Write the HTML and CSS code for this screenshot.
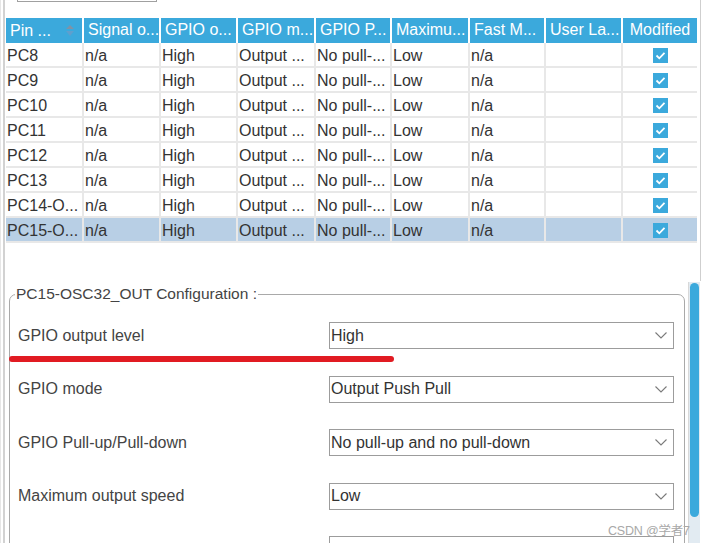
FILE: index.html
```
<!DOCTYPE html>
<html>
<head>
<meta charset="utf-8">
<link rel="stylesheet" href="styles.css">
</head>
<body>
<div class="app">
  <div class="main">
    <section class="table-panel">
      <div class="stub"></div>
      <div class="grid">
        <div class="th th-sort"><span>Pin ...</span>
          <svg class="sort" width="10" height="13" viewBox="0 0 10 13"><path d="M1 5 L5 1 L9 5 Z" fill="#7f93a6"/><path d="M1 7 L9 7 L5 12 Z" fill="#5f9fcd"/></svg>
        </div>
        <div class="th">Signal o...</div>
        <div class="th">GPIO o...</div>
        <div class="th">GPIO m...</div>
        <div class="th">GPIO P...</div>
        <div class="th">Maximu...</div>
        <div class="th">Fast M...</div>
        <div class="th">User La...</div>
        <div class="th th-last">Modified</div>

        <div class="td">PC8</div><div class="td">n/a</div><div class="td">High</div><div class="td">Output ...</div><div class="td">No pull-...</div><div class="td">Low</div><div class="td">n/a</div><div class="td"></div><div class="td td-last"><span class="chk"><svg width="15" height="15" viewBox="0 0 15 15"><path d="M3.5 7.5 L6.3 10.3 L11.5 4.8" fill="none" stroke="#fff" stroke-width="1.8"/></svg></span></div>
        <div class="td">PC9</div><div class="td">n/a</div><div class="td">High</div><div class="td">Output ...</div><div class="td">No pull-...</div><div class="td">Low</div><div class="td">n/a</div><div class="td"></div><div class="td td-last"><span class="chk"><svg width="15" height="15" viewBox="0 0 15 15"><path d="M3.5 7.5 L6.3 10.3 L11.5 4.8" fill="none" stroke="#fff" stroke-width="1.8"/></svg></span></div>
        <div class="td">PC10</div><div class="td">n/a</div><div class="td">High</div><div class="td">Output ...</div><div class="td">No pull-...</div><div class="td">Low</div><div class="td">n/a</div><div class="td"></div><div class="td td-last"><span class="chk"><svg width="15" height="15" viewBox="0 0 15 15"><path d="M3.5 7.5 L6.3 10.3 L11.5 4.8" fill="none" stroke="#fff" stroke-width="1.8"/></svg></span></div>
        <div class="td">PC11</div><div class="td">n/a</div><div class="td">High</div><div class="td">Output ...</div><div class="td">No pull-...</div><div class="td">Low</div><div class="td">n/a</div><div class="td"></div><div class="td td-last"><span class="chk"><svg width="15" height="15" viewBox="0 0 15 15"><path d="M3.5 7.5 L6.3 10.3 L11.5 4.8" fill="none" stroke="#fff" stroke-width="1.8"/></svg></span></div>
        <div class="td">PC12</div><div class="td">n/a</div><div class="td">High</div><div class="td">Output ...</div><div class="td">No pull-...</div><div class="td">Low</div><div class="td">n/a</div><div class="td"></div><div class="td td-last"><span class="chk"><svg width="15" height="15" viewBox="0 0 15 15"><path d="M3.5 7.5 L6.3 10.3 L11.5 4.8" fill="none" stroke="#fff" stroke-width="1.8"/></svg></span></div>
        <div class="td">PC13</div><div class="td">n/a</div><div class="td">High</div><div class="td">Output ...</div><div class="td">No pull-...</div><div class="td">Low</div><div class="td">n/a</div><div class="td"></div><div class="td td-last"><span class="chk"><svg width="15" height="15" viewBox="0 0 15 15"><path d="M3.5 7.5 L6.3 10.3 L11.5 4.8" fill="none" stroke="#fff" stroke-width="1.8"/></svg></span></div>
        <div class="td">PC14-O...</div><div class="td">n/a</div><div class="td">High</div><div class="td">Output ...</div><div class="td">No pull-...</div><div class="td">Low</div><div class="td">n/a</div><div class="td"></div><div class="td td-last"><span class="chk"><svg width="15" height="15" viewBox="0 0 15 15"><path d="M3.5 7.5 L6.3 10.3 L11.5 4.8" fill="none" stroke="#fff" stroke-width="1.8"/></svg></span></div>
        <div class="td sel">PC15-O...</div><div class="td sel">n/a</div><div class="td sel">High</div><div class="td sel">Output ...</div><div class="td sel">No pull-...</div><div class="td sel">Low</div><div class="td sel">n/a</div><div class="td sel"></div><div class="td sel td-last"><span class="chk"><svg width="15" height="15" viewBox="0 0 15 15"><path d="M3.5 7.5 L6.3 10.3 L11.5 4.8" fill="none" stroke="#fff" stroke-width="1.8"/></svg></span></div>
      </div>
    </section>

    <section class="config">
      <div class="config-body">
        <fieldset class="cfg">
          <legend>PC15-OSC32_OUT Configuration :</legend>
          <div class="rows">
            <div class="label">GPIO output level</div>
            <div class="select"><span>High</span><svg class="chev" width="12" height="7" viewBox="0 0 12 7"><path d="M0.5 0.5 L6 6 L11.5 0.5" fill="none" stroke="#7a7a7a" stroke-width="1.1"/></svg></div>
            <div class="label">GPIO mode</div>
            <div class="select"><span>Output Push Pull</span><svg class="chev" width="12" height="7" viewBox="0 0 12 7"><path d="M0.5 0.5 L6 6 L11.5 0.5" fill="none" stroke="#7a7a7a" stroke-width="1.1"/></svg></div>
            <div class="label">GPIO Pull-up/Pull-down</div>
            <div class="select"><span>No pull-up and no pull-down</span><svg class="chev" width="12" height="7" viewBox="0 0 12 7"><path d="M0.5 0.5 L6 6 L11.5 0.5" fill="none" stroke="#7a7a7a" stroke-width="1.1"/></svg></div>
            <div class="label">Maximum output speed</div>
            <div class="select"><span>Low</span><svg class="chev" width="12" height="7" viewBox="0 0 12 7"><path d="M0.5 0.5 L6 6 L11.5 0.5" fill="none" stroke="#7a7a7a" stroke-width="1.1"/></svg></div>
            <div class="label">User Label</div>
            <div class="select"><span></span></div>
          </div>
        </fieldset>
      </div>
      <div class="scroll"><div class="thumb"></div></div>
    </section>
  </div>
  <div class="annot"></div>
  <div class="wm">CSDN @学者7</div>
</div>
</body>
</html>
```

FILE: styles.css
```
html, body {
  margin: 0;
  padding: 0;
  background: #fff;
}
body {
  font-family: "Liberation Sans", Arial, sans-serif;
  font-size: 16px;
  color: #333;
}
.app {
  position: relative;
  width: 703px;
  height: 543px;
  overflow: hidden;
  box-sizing: border-box;
  border-left: 1px solid #e6e6e6;
}
.main {
  margin-left: 2px;
  border-left: 2px solid #d2d2d2;
  height: 543px;
  display: flex;
  flex-direction: column;
}
.table-panel {
  height: 281px;
  width: 696px;
  box-sizing: border-box;
  border-right: 1px solid #cfcfcf;
  flex: none;
}
.stub {
  margin-left: 12px;
  width: 140px;
  height: 2px;
  box-sizing: border-box;
  border: 1px solid #a0a0a0;
  border-top: none;
}
.grid {
  margin-top: 16px;
  margin-left: 1px;
  display: grid;
  grid-template-columns: 78px 77px 77px 78px 76px 78px 76px 77px 74px;
  grid-auto-rows: 25px;
}
.th {
  background: #3ba9dc;
  color: #fff;
  border-right: 2px solid #fff;
  height: 25px;
  line-height: 24px;
  padding: 0 0 0 4px;
  white-space: nowrap;
  overflow: hidden;
  box-sizing: border-box;
  text-align: left;
}
.th-last {
  border-right: none;
  text-align: center;
  padding: 0;
}
.th-sort {
  display: flex;
  align-items: center;
  justify-content: space-between;
  padding-right: 7px;
}
.sort {
  display: block;
}
.td {
  border-right: 2px solid #e8e8e8;
  border-bottom: 2px solid #e8e8e8;
  box-sizing: border-box;
  line-height: 25px;
  padding-left: 1px;
  white-space: nowrap;
  overflow: hidden;
  color: #333;
}
.td.sel {
  background: #b8cfe5;
}
.td-last {
  border-right: none;
  display: flex;
  align-items: center;
  justify-content: center;
  padding: 1px 0 0 0;
}
.chk {
  width: 15px;
  height: 15px;
  background: #3ba9dc;
  display: block;
  margin-left: 1px;
}
.chk svg {
  display: block;
}
.config {
  flex: 1;
  display: flex;
  min-height: 0;
}
.config-body {
  flex: 1;
  padding-left: 4px;
  padding-right: 3px;
}
.cfg {
  margin: 4px 0 0 0;
  padding: 0 9px 0 8px;
  border: 1px solid #a9a9a9;
  border-radius: 7px;
  height: 400px;
  box-sizing: border-box;
}
.cfg legend {
  margin-left: -3px;
  padding: 0 1px;
  color: #444;
  font-size: 15.5px;
  line-height: 18px;
}
.rows {
  display: grid;
  grid-template-columns: 311px 345px;
  grid-auto-rows: 53.5px;
  align-items: center;
  margin-top: 6px;
}
.label {
  color: #444;
}
.select {
  height: 27px;
  box-sizing: border-box;
  border: 1px solid #9c9c9c;
  display: flex;
  align-items: center;
  justify-content: space-between;
  padding: 0 6px 0 1px;
  color: #333;
}
.chev {
  display: block;
}
.scroll {
  width: 12px;
  flex: none;
  margin-right: 3px;
  margin-top: 1px;
  background: #e2ebf2;
  border-left: 1px solid #d8d8d8;
  padding: 1px 1px 0 1px;
  box-sizing: border-box;
}
.thumb {
  height: 234px;
  background: #3ba9dc;
  border-radius: 5px;
}
.annot {
  position: absolute;
  left: 8px;
  top: 356px;
  width: 385px;
  height: 6px;
  border-radius: 3px;
  background: #e11b22;
}
.wm {
  position: absolute;
  left: 607px;
  top: 520px;
  font-size: 12.5px;
  letter-spacing: -0.2px;
  color: #a8a8a8;
  font-family: "Liberation Sans", "Noto Sans CJK SC", sans-serif;
  white-space: nowrap;
}
```
